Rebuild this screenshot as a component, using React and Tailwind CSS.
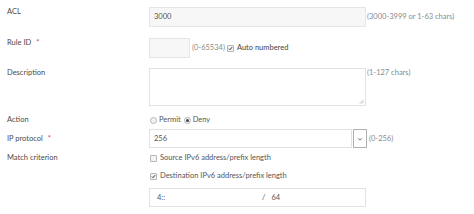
import React from 'react'

const font = { fontFamily: 'Lato, "Liberation Sans", sans-serif' }

const Box = ({ checked }) => (
  <span className="inline-flex w-[7px] h-[7px] border border-[#b5b5b5] bg-[#f4f4f4] items-center justify-center rounded-[1px]">
    {checked && (
      <svg viewBox="0 0 8 8" className="w-[7px] h-[7px]">
        <path d="M1.5 4.2 L3.2 5.9 L6.6 1.8" stroke="#333" strokeWidth="1.6" fill="none" />
      </svg>
    )}
  </span>
)

const Radio = ({ checked }) => (
  <span className="inline-flex w-[7px] h-[7px] rounded-full border border-[#b5b5b5] bg-[#f2f2f2] items-center justify-center">
    {checked && <span className="w-[3px] h-[3px] rounded-full bg-[#444]" />}
  </span>
)

const Label = ({ children, req, className = '' }) => (
  <div className={`w-[149px] pl-[7px] shrink-0 text-[#4a4a4a] ${className}`}>
    {children}
    {req && <span className="text-[#d0455a] ml-[5px]">*</span>}
  </div>
)

export default function App() {
  return (
    <div className="w-[474px] h-[214px] bg-white text-[7.5px] leading-[10px] overflow-hidden" style={font}>
      {/* ACL */}
      <div className="flex mt-[7px]">
        <Label>ACL</Label>
        <div className="w-[217px] h-[20px] border border-[#e6e6e6] bg-[#f7f7f7] flex items-center pl-[4px] text-[#555]">3000</div>
        <div className="ml-[1px] mt-[5px] text-[#8a8a8a]">(3000-3999 or 1-63 chars)</div>
      </div>

      {/* Rule ID */}
      <div className="flex mt-[11px]">
        <Label req>Rule ID</Label>
        <div className="w-[41px] h-[20px] border border-[#e6e6e6] bg-[#f7f7f7]" />
        <div className="flex items-center h-[20px] ml-[2px] gap-[2px]">
          <span className="text-[#8a8a8a]">(0-65534)</span>
          <Box checked />
          <span className="text-[#444] ml-[1px]">Auto numbered</span>
        </div>
      </div>

      {/* Description */}
      <div className="flex mt-[10px]">
        <Label>Description</Label>
        <div className="relative w-[217px] h-[38px] border border-[#e2e2e2] bg-white">
          <svg viewBox="0 0 6 6" className="absolute right-[1px] bottom-[1px] w-[5px] h-[5px]">
            <path d="M5.5 1 L1 5.5 M5.5 3.5 L3.5 5.5" stroke="#9a9a9a" strokeWidth="0.8" />
          </svg>
        </div>
        <div className="ml-[1px] text-[#8a8a8a]">(1-127 chars)</div>
      </div>

      {/* Action */}
      <div className="flex mt-[9px] items-center h-[10px]">
        <Label>Action</Label>
        <div className="flex items-center gap-[2px] ml-[1px] text-[#555]">
          <Radio />
          <span>Permit</span>
          <span className="ml-[1px]"><Radio checked /></span>
          <span>Deny</span>
        </div>
      </div>

      {/* IP protocol */}
      <div className="flex mt-[4px] items-center">
        <Label req>IP protocol</Label>
        <div className="w-[203px] h-[19px] border border-[#e2e2e2] bg-white flex items-center pl-[4px] text-[#555]">256</div>
        <div className="w-[14px] h-[19px] border border-[#b0b0b0] bg-white flex items-center justify-center ml-[1px]">
          <svg viewBox="0 0 8 8" className="w-[6px] h-[6px]">
            <path d="M1.5 3 L4 5.5 L6.5 3" stroke="#555" strokeWidth="1.1" fill="none" />
          </svg>
        </div>
        <div className="ml-[2px] text-[#8a8a8a]">(0-256)</div>
      </div>

      {/* Match criterion */}
      <div className="flex mt-[5px] items-center h-[10px]">
        <Label>Match criterion</Label>
        <div className="flex items-center gap-[3px] ml-[1px] text-[#555]">
          <Box />
          <span>Source IPv6 address/prefix length</span>
        </div>
      </div>

      <div className="flex mt-[8px] items-center h-[10px]">
        <Label />
        <div className="flex items-center gap-[3px] ml-[1px] text-[#555]">
          <Box checked />
          <span>Destination IPv6 address/prefix length</span>
        </div>
      </div>

      <div className="flex mt-[7px]">
        <Label />
        <div className="w-[217px] h-[19px] border border-[#e2e2e2] bg-white flex items-center text-[#555]">
          <span className="pl-[7px] w-[112px]">4::</span>
          <span>/</span>
          <span className="ml-[6px]">64</span>
        </div>
      </div>
    </div>
  )
}
